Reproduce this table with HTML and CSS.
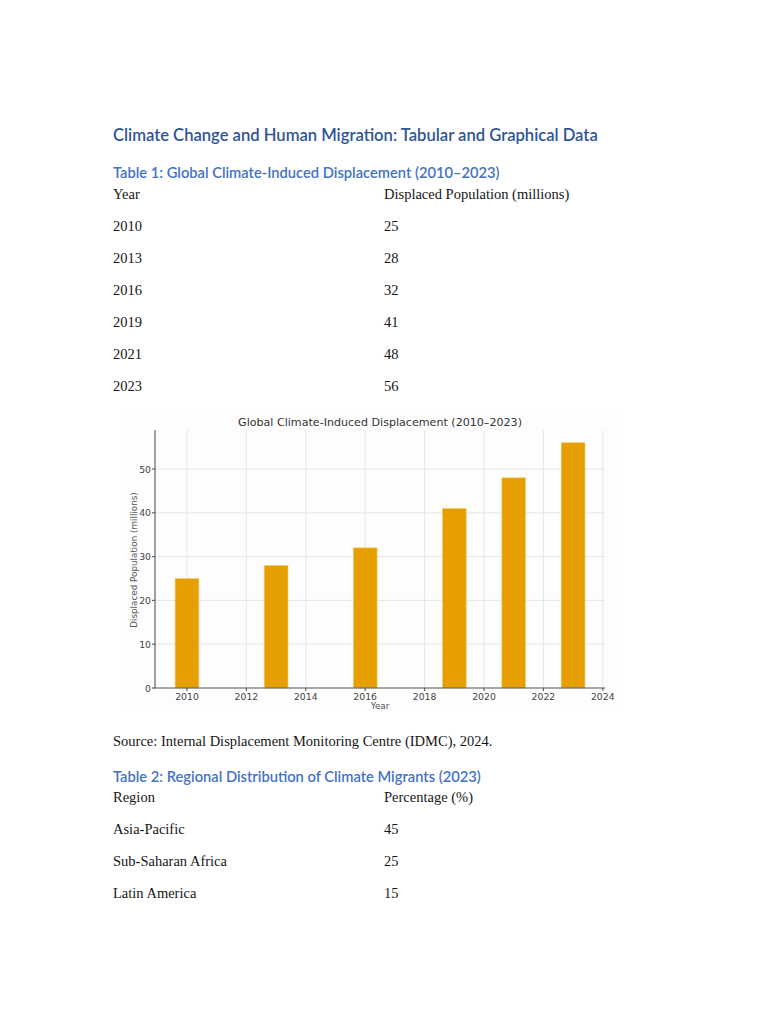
FILE: index.html
```html
<!DOCTYPE html>
<html lang="en">
<head>
    <meta charset="UTF-8">
    <meta name="viewport" content="width=device-width, initial-scale=1.0">
    <title>Climate Change and Human Migration</title>
    <link rel="stylesheet" href="styles.css">
</head>
<body>
    <main class="page">
        <h1 class="doc-title">Climate Change and Human Migration: Tabular and Graphical Data</h1>

        <h2 class="table-title">Table 1: Global Climate-Induced Displacement (2010–2023)</h2>
        <div class="data-table">
            <div class="cell head">Year</div>
            <div class="cell head">Displaced Population (millions)</div>
            <div class="cell">2010</div><div class="cell">25</div>
            <div class="cell">2013</div><div class="cell">28</div>
            <div class="cell">2016</div><div class="cell">32</div>
            <div class="cell">2019</div><div class="cell">41</div>
            <div class="cell">2021</div><div class="cell">48</div>
            <div class="cell">2023</div><div class="cell">56</div>
        </div>

        <figure class="chart">
            <svg width="500" height="304" viewBox="0 0 500 304">
                <rect x="0" y="0" width="500" height="304" fill="#fdfdfd"/>
                <text class="chart-title" x="258" y="18" text-anchor="middle">Global Climate-Induced Displacement (2010–2023)</text>

                <!-- grid -->
                <g stroke="#e6e6e6" stroke-width="1">
                    <line x1="65" y1="22" x2="65" y2="280"/>
                    <line x1="124.4" y1="22" x2="124.4" y2="280"/>
                    <line x1="183.8" y1="22" x2="183.8" y2="280"/>
                    <line x1="243.2" y1="22" x2="243.2" y2="280"/>
                    <line x1="302.6" y1="22" x2="302.6" y2="280"/>
                    <line x1="362" y1="22" x2="362" y2="280"/>
                    <line x1="421.4" y1="22" x2="421.4" y2="280"/>
                    <line x1="480.8" y1="22" x2="480.8" y2="280"/>
                    <line x1="33" y1="236.2" x2="483" y2="236.2"/>
                    <line x1="33" y1="192.4" x2="483" y2="192.4"/>
                    <line x1="33" y1="148.6" x2="483" y2="148.6"/>
                    <line x1="33" y1="104.8" x2="483" y2="104.8"/>
                    <line x1="33" y1="61" x2="483" y2="61"/>
                </g>

                <!-- bars -->
                <g fill="#e69f00" stroke="#f3cf7a" stroke-width="0.6">
                    <rect x="53.1" y="170.5" width="23.8" height="109.5"/>
                    <rect x="142.2" y="157.4" width="23.8" height="122.6"/>
                    <rect x="231.3" y="139.8" width="23.8" height="140.2"/>
                    <rect x="320.4" y="100.4" width="23.8" height="179.6"/>
                    <rect x="379.8" y="69.8" width="23.8" height="210.2"/>
                    <rect x="439.2" y="34.7" width="23.8" height="245.3"/>
                </g>

                <!-- axes -->
                <g stroke="#555" stroke-width="1.1">
                    <line x1="33" y1="22" x2="33" y2="280.5"/>
                    <line x1="32.5" y1="280" x2="483" y2="280"/>
                    <line x1="30" y1="280" x2="33" y2="280"/>
                    <line x1="30" y1="236.2" x2="33" y2="236.2"/>
                    <line x1="30" y1="192.4" x2="33" y2="192.4"/>
                    <line x1="30" y1="148.6" x2="33" y2="148.6"/>
                    <line x1="30" y1="104.8" x2="33" y2="104.8"/>
                    <line x1="30" y1="61" x2="33" y2="61"/>
                    <line x1="65" y1="280" x2="65" y2="283"/>
                    <line x1="124.4" y1="280" x2="124.4" y2="283"/>
                    <line x1="183.8" y1="280" x2="183.8" y2="283"/>
                    <line x1="243.2" y1="280" x2="243.2" y2="283"/>
                    <line x1="302.6" y1="280" x2="302.6" y2="283"/>
                    <line x1="362" y1="280" x2="362" y2="283"/>
                    <line x1="421.4" y1="280" x2="421.4" y2="283"/>
                    <line x1="480.8" y1="280" x2="480.8" y2="283"/>
                </g>

                <g class="tick" text-anchor="end">
                    <text x="29" y="283.5">0</text>
                    <text x="29" y="239.7">10</text>
                    <text x="29" y="195.9">20</text>
                    <text x="29" y="152.1">30</text>
                    <text x="29" y="108.3">40</text>
                    <text x="29" y="64.5">50</text>
                </g>
                <g class="tick" text-anchor="middle">
                    <text x="65" y="292">2010</text>
                    <text x="124.4" y="292">2012</text>
                    <text x="183.8" y="292">2014</text>
                    <text x="243.2" y="292">2016</text>
                    <text x="302.6" y="292">2018</text>
                    <text x="362" y="292">2020</text>
                    <text x="421.4" y="292">2022</text>
                    <text x="480.8" y="292">2024</text>
                </g>
                <text class="axis-label" x="258" y="301" text-anchor="middle">Year</text>
                <text class="axis-label" x="15" y="152" text-anchor="middle" transform="rotate(-90 15 152)">Displaced Population (millions)</text>
            </svg>
        </figure>

        <p class="source">Source: Internal Displacement Monitoring Centre (IDMC), 2024.</p>

        <h2 class="table-title second">Table 2: Regional Distribution of Climate Migrants (2023)</h2>
        <div class="data-table">
            <div class="cell head">Region</div>
            <div class="cell head">Percentage (%)</div>
            <div class="cell">Asia-Pacific</div><div class="cell">45</div>
            <div class="cell">Sub-Saharan Africa</div><div class="cell">25</div>
            <div class="cell">Latin America</div><div class="cell">15</div>
        </div>
    </main>
</body>
</html>
```

FILE: styles.css
```css
body {
    margin: 0;
    padding: 0;
    background: #fff;
    color: #161616;
    font-family: "Liberation Serif", "DejaVu Serif", serif;
}

.page {
    width: 768px;
    min-height: 1024px;
    box-sizing: border-box;
    padding: 124px 0 0 113px;
}

.doc-title {
    margin: 0;
    font-family: Lato, "Open Sans", sans-serif;
    font-size: 16.6px;
    line-height: 22px;
    font-weight: 600;
    color: #2f5496;
}

.table-title {
    margin: 16px 0 2px;
    font-family: Lato, "Open Sans", sans-serif;
    font-size: 14.7px;
    line-height: 20px;
    font-weight: 600;
    color: #4472c4;
}

.table-title.second {
    margin-top: 15px;
    margin-bottom: 1px;
}

.data-table {
    display: grid;
    grid-template-columns: 271px auto;
    row-gap: 12px;
    font-size: 14.5px;
    line-height: 20px;
}

.chart {
    margin: 12px 0 0 9px;
    width: 500px;
    height: 304px;
}

.chart svg {
    display: block;
}

.chart-title {
    font-family: "DejaVu Sans", sans-serif;
    font-size: 11.1px;
    fill: #333;
}

.tick {
    font-family: "DejaVu Sans", sans-serif;
    font-size: 9.3px;
    fill: #444;
}

.axis-label {
    font-family: "DejaVu Sans", sans-serif;
    font-size: 8.8px;
    fill: #555;
}

.source {
    margin: 19px 0 0;
    font-size: 14.5px;
    line-height: 20px;
}
```
